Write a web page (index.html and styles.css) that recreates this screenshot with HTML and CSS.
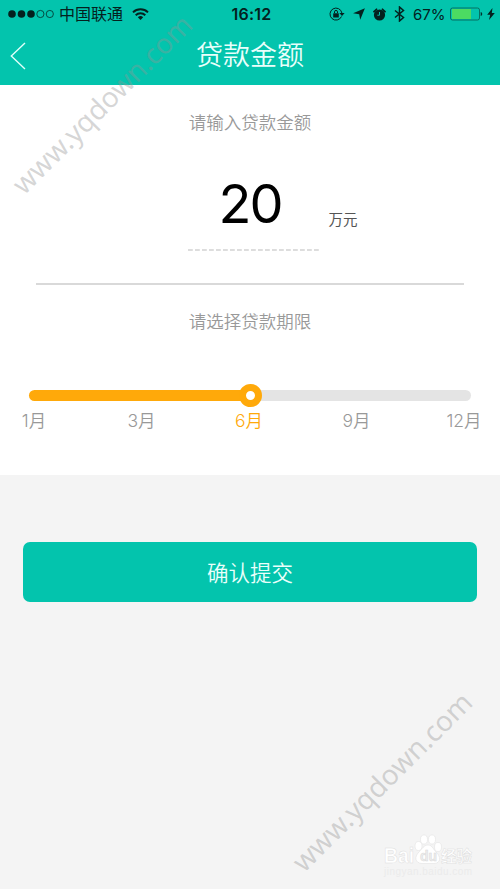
FILE: index.html
```
<!DOCTYPE html>
<html lang="zh-CN">
<head>
<meta charset="utf-8">
<title>贷款金额</title>
<link rel="stylesheet" href="styles.css">
</head>
<body>
<div class="screen">
  <header class="header">
    <div class="status">
      <div class="status-left">
        <svg class="signal" width="46" height="10" viewBox="0 0 46 10"><g fill="#04211e"><circle cx="4" cy="5" r="3.800"/><circle cx="13.500" cy="5" r="3.800"/><circle cx="23" cy="5" r="3.800"/></g><g fill="none" stroke="#04302b" stroke-width=".8"><circle cx="32.400" cy="5" r="3.600"/><circle cx="41.800" cy="5" r="3.600"/></g></svg>
        <span class="carrier">中国联通</span>
        <svg class="wifi" width="17" height="12" viewBox="0 0 17 12"><g fill="none" stroke="#04211e" stroke-width="2"><path d="M1 4.400a10.800 10.800 0 0 1 15 0"/><path d="M3.700 7.300a6.900 6.900 0 0 1 9.600 0"/></g><path fill="#04211e" d="M8.500 12 5.800 9.200a4 4 0 0 1 5.400 0z"/></svg>
      </div>
      <span class="clock">16:12</span>
      <div class="status-right">
        <svg width="16" height="14" viewBox="0 0 16 14"><path d="M12.500 9.500A6 6 0 1 1 12.900 6" fill="none" stroke="#04211e" stroke-width="1"/><path d="M10.400 6h5.200L13 9z" fill="#04211e"/><rect x="4.200" y="6.200" width="5.600" height="4.300" rx=".5" fill="#04211e"/><path d="M5.500 6V4.900a1.500 1.500 0 0 1 3 0V6" fill="none" stroke="#04211e"/></svg>
        <svg class="arrow" width="12" height="12" viewBox="0 0 12 12"><path fill="#04211e" d="M11.900.2 7.200 11.800 6.200 6.200.1 5.300z"/></svg>
        <svg class="alarm" width="13" height="13" viewBox="0 0 13 13"><circle cx="6.500" cy="7" r="5.600" fill="#04211e"/><path d="M1 3.600 3.500 1.300M12 3.600 9.500 1.300" stroke="#04211e" stroke-width="1.800" stroke-linecap="round"/><path d="M6.500 4v3.200H4.300" fill="none" stroke="#08baa5" stroke-width="1"/></svg>
        <svg class="bluetooth" width="11" height="16" viewBox="0 0 11 16"><path d="m1 4.500 8.500 7L5.500 15V1l4 3.500-8.500 7" fill="none" stroke="#04211e" stroke-width="1.500"/></svg>
        <span class="percent">67%</span>
        <svg class="battery" width="33" height="14" viewBox="0 0 33 14"><rect x=".5" y="1" width="29" height="12" rx="2" fill="none" stroke="#08665a" stroke-width=".9"/><path fill="#4cdb62" d="M2 2h19v10H2z"/><path fill="#04302b" d="M30.700 5c2 .3 2 3.700 0 4z"/></svg>
        <svg class="bolt" width="8" height="12" viewBox="0 0 8 12"><path fill="#04211e" d="M5.500 0 .2 6.700h3L2 12l5.800-7h-3z"/></svg>
      </div>
    </div>
    <div class="nav">
      <svg class="back" width="16" height="28" viewBox="0 0 16 28"><path d="M15 1 1.300 14 15 27" fill="none" stroke="#e0fffa" stroke-width="1.400"/></svg>
      <h1 class="title">贷款金额</h1>
      <span class="nav-end"></span>
    </div>
  </header>
  <main>
    <section class="panel">
      <div class="amount-block">
        <p class="label">请输入贷款金额</p>
        <div class="amount">
          <span class="value">20</span>
          <span class="unit">万元</span>
        </div>
        <svg class="dashes" width="131" height="2" viewBox="0 0 131 2"><path d="M0 1h131" stroke="#bbb" stroke-width="1.100" stroke-dasharray="4.800 2.200"/></svg>
      </div>
      <div class="term-block">
        <p class="label">请选择贷款期限</p>
        <div class="slider"><div class="fill"></div><div class="knob"></div><div class="rest"></div></div>
        <div class="months"><span>1月</span><span>3月</span><span class="active">6月</span><span>9月</span><span>12月</span></div>
      </div>
    </section>
    <button class="submit">确认提交</button>
  </main>
  <svg class="overlay" width="500" height="889" viewBox="0 0 500 889">
    <g class="url">
      <text transform="translate(24 196) rotate(-44.800)" textLength="240">www.yqdown.com</text>
      <text transform="translate(304 873.500) rotate(-44.800)" textLength="240">www.yqdown.com</text>
    </g>
    <g class="brand">
      <text class="brand-latin" x="384" y="863" textLength="30" lengthAdjust="spacingAndGlyphs">Bai</text>
      <g class="paw"><ellipse cx="418.500" cy="846" rx="3.500" ry="4.500"/><ellipse cx="424" cy="839.500" rx="3.500" ry="4.500"/><ellipse cx="432" cy="839.500" rx="3.500" ry="4.500"/><ellipse cx="438" cy="847" rx="3.500" ry="4.500"/><path d="M428 845c-4 0-6 4-9 7-5 5-4 11 3 11.500h12c7 0 7-7 2-11.500-3-3-4-7-8-7z"/></g>
      <text class="brand-du" x="420" y="861">du</text>
      <text class="brand-cjk" x="441" y="862" textLength="31">经验</text>
      <text class="brand-url" x="384" y="875" textLength="88">jingyan.baidu.com</text>
    </g>
  </svg>
</div>
</body>
</html>
```
FILE: styles.css
```
* { box-sizing: border-box; }
body { margin: 0; background: #f4f4f4; font-family: Inter, "Noto Sans CJK SC", sans-serif; font-weight: 350; }
p, h1 { margin: 0; font-weight: inherit; }
svg { display: block; flex: none; }
.screen { position: relative; width: 500px; height: 889px; overflow: hidden; }
.header { height: 85px; background: #03c4ad; }
.status { display: grid; grid-template-columns: 1fr auto 1fr; align-items: center; height: 28px; padding: 0 5px 0 8px; color: #04211e; }
.status-left, .status-right { display: flex; align-items: center; }
.status-right { justify-content: flex-end; }
.carrier { margin-left: 5px; font-size: 16px; line-height: 24px; font-weight: 400; }
.wifi { margin-left: 9px; }
.clock { font-size: 16px; font-weight: 600; letter-spacing: .2px; }
.arrow { margin-left: 8px; }
.alarm { margin-left: 8px; }
.bluetooth { margin-left: 8px; }
.percent { margin-left: 8px; font-size: 15px; font-weight: 400; width: 34px; }
.battery { margin-left: 3px; }
.bolt { margin-left: 4px; }
.nav { display: grid; grid-template-columns: 1fr auto 1fr; align-items: center; height: 56px; padding: 0 10px; }
.title { color: #e9fffb; font-size: 27px; line-height: 40px; }
.panel { display: flex; flex-direction: column; height: 390px; padding: 0 36px; background: #fff; }
.amount-block { display: flex; flex-direction: column; align-items: center; height: 200px; padding-top: 25px; border-bottom: 2px solid #d9d9d9; }
.label { color: #999; font-size: 17.5px; line-height: 25px; text-align: center; }
.amount { display: grid; grid-template-columns: 1fr auto 1fr; align-items: baseline; width: 100%; height: 70px; margin-top: 37px; }
.value { grid-column: 2; color: #000; font-size: 54px; line-height: 64px; font-weight: 400; letter-spacing: -2px; }
.unit { position: relative; top: 2px; color: #555; font-size: 14.5px; line-height: 20px; margin-left: 47px; font-weight: 400; }
.dashes { margin-top: 7px; margin-left: 7px; }
.term-block { padding-top: 24px; }
.slider { display: flex; align-items: center; height: 24px; margin: 49px -7px 0; }
.fill { width: 213px; height: 11px; border-radius: 6px 0 0 6px; background: #ffa90a; }
.knob { width: 23px; height: 23px; margin: 0 -3px; border: 7px solid #ffa90a; border-radius: 50%; background: #fff; z-index: 1; }
.rest { flex: 1; height: 11px; border-radius: 0 6px 6px 0; background: #e4e4e4; }
.months { display: flex; justify-content: space-between; margin: 0 -30px 0 -32px; color: #999; font-size: 17.5px; line-height: 28px; }
.months span { width: 60px; text-align: center; }
.months .active { color: #ffa90a; }
.submit { display: block; width: 454px; height: 60px; margin: 67px auto 0; padding: 0; border: 0; border-radius: 7px; background: #03c4ad; color: #e9fffb; font: 350 21.5px/60px "Noto Sans CJK SC", sans-serif; }
.overlay { position: absolute; left: 0; top: 0; pointer-events: none; }
.url { fill: #949494; fill-opacity: .38; font-family: "Noto Sans", sans-serif; font-size: 28px; font-weight: 400; }
.brand { fill: #fff; stroke: #dedede; stroke-width: .5; }
.brand-latin { font: 700 22px "Liberation Sans", sans-serif; }
.brand-du { font: 700 14px "Liberation Sans", sans-serif; fill: #eee; stroke: #d9d9d9; }
.brand-cjk { font: 700 15.5px "Noto Sans CJK SC", sans-serif; }
.brand-url { font: 400 10px "Liberation Sans", sans-serif; fill: #ebebeb; stroke: none; }
```
